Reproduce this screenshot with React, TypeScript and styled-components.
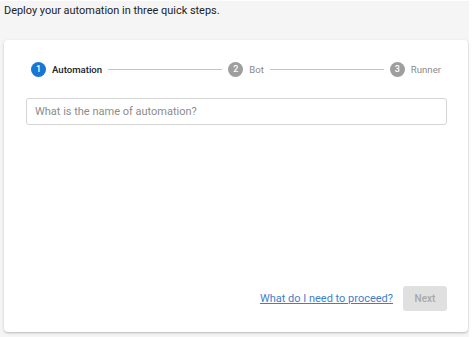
import styled, { createGlobalStyle } from "styled-components";

const GlobalStyle = createGlobalStyle`
    html, body {
        margin: 0;
        padding: 0;
        background: #ffffff;
    }
    body {
        font-family: Roboto, "Liberation Sans", Arial, sans-serif;
        -webkit-font-smoothing: antialiased;
    }
`;

const Page = styled.div`
    width: 469px;
    height: 337px;
    box-sizing: border-box;
    background-color: #f5f5f5;
    padding: 2px 1px 0 4px;
    margin-top: 1px;
`;

const Intro = styled.p`
    margin: 0;
    font-size: 10.95px;
    line-height: 16px;
    color: #222;
`;

const Card = styled.div`
    margin-top: 21px;
    height: 292px;
    box-sizing: border-box;
    background: #fff;
    border-radius: 4px;
    box-shadow: 0 1px 3px rgba(0, 0, 0, 0.18), 0 1px 1px rgba(0, 0, 0, 0.08);
    padding: 21px 21px 21px 22px;
    display: flex;
    flex-direction: column;
`;

const Stepper = styled.div`
    display: flex;
    align-items: center;
    height: 16px;
    padding: 0 6px 0 5px;
`;

const Step = styled.div`
    display: flex;
    align-items: center;
    gap: 6px;
`;

const Circle = styled.span<{ active: boolean }>`
    width: 15px;
    height: 15px;
    border-radius: 50%;
    background-color: ${(props) => (props.active ? "#1976d2" : "#9e9e9e")};
    color: #fff;
    font-size: 9px;
    font-weight: 500;
    display: flex;
    align-items: center;
    justify-content: center;
`;

const Label = styled.span<{ active: boolean }>`
    font-size: 9.6px;
    font-weight: ${(props) => (props.active ? 500 : 400)};
    color: ${(props) => (props.active ? "#212121" : "#8a8a8a")};
`;

const Connector = styled.div`
    flex: 1;
    height: 1px;
    background-color: #c4c4c4;
    margin: 0 6px;
`;

const NameInput = styled.input`
    margin-top: 21px;
    height: 27px;
    box-sizing: border-box;
    border: 1px solid #d4d4d4;
    border-radius: 3px;
    padding: 0 8px;
    font-family: inherit;
    font-size: 11px;
    color: #333;
    outline: none;
    &::placeholder {
        color: #8c8c8c;
    }
`;

const Footer = styled.div`
    margin-top: auto;
    display: flex;
    justify-content: flex-end;
    align-items: center;
    gap: 10px;
`;

const HelpLink = styled.a`
    font-size: 11px;
    color: #3f7ecb;
    text-decoration: underline;
    cursor: pointer;
`;

const NextButton = styled.button`
    width: 44px;
    height: 25px;
    border: none;
    border-radius: 3px;
    background-color: #e0e0e0;
    color: #a8a8a8;
    font-family: inherit;
    font-size: 10px;
    font-weight: 500;
`;

const steps = ["Automation", "Bot", "Runner"];

export default function App() {
    return (
        <>
            <GlobalStyle />
            <Page>
                <Intro>Deploy your automation in three quick steps.</Intro>
                <Card>
                    <Stepper>
                        {steps.map((name, i) => (
                            <>
                                {i > 0 && <Connector key={name + "_line"} />}
                                <Step key={name}>
                                    <Circle active={i === 0}>{i + 1}</Circle>
                                    <Label active={i === 0}>{name}</Label>
                                </Step>
                            </>
                        ))}
                    </Stepper>
                    <NameInput placeholder="What is the name of automation?" />
                    <Footer>
                        <HelpLink>What do I need to proceed?</HelpLink>
                        <NextButton disabled>Next</NextButton>
                    </Footer>
                </Card>
            </Page>
        </>
    );
}
